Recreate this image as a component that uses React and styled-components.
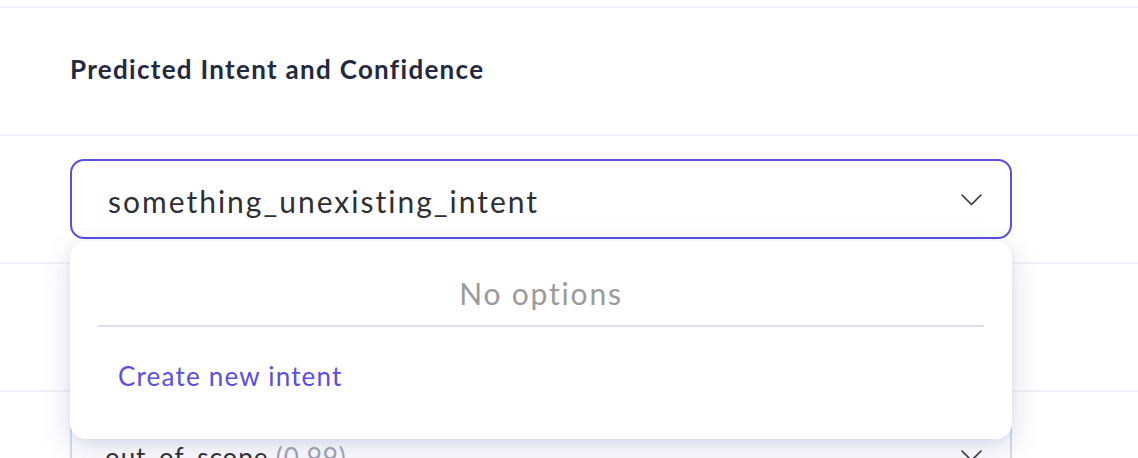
import styled, { createGlobalStyle } from 'styled-components';

const GlobalStyle = createGlobalStyle`
  body {
    margin: 0;
    background: #ffffff;
    font-family: Lato, 'Open Sans', sans-serif;
  }
`;

const Page = styled.div`
  padding-top: 6px;
  overflow: hidden;
  height: 452px;
`;

const Row = styled.div`
  display: flex;
  align-items: center;
  height: 126px;
  padding-left: 70px;
  border-top: 2px solid #f3f2f8;
`;

const Heading = styled.h3`
  margin: 0 0 5px;
  font-size: 26px;
  font-weight: 700;
  letter-spacing: 1.3px;
  color: #232940;
`;

const SelectWrap = styled.div`
  position: relative;
  width: 942px;
  z-index: ${({ $open }) => ($open ? 2 : 1)};
`;

const Control = styled.div`
  box-sizing: border-box;
  height: 80px;
  display: flex;
  align-items: center;
  justify-content: space-between;
  padding: 0 28px 0 ${({ $focused }) => ($focused ? '36px' : '33px')};
  border: 2px solid ${({ $focused }) => ($focused ? '#5a4fe0' : '#d8d9ee')};
  border-radius: 14px;
  background: #fff;
`;

const Value = styled.span`
  padding-top: 4px;
  font-size: ${({ $size }) => $size}px;
  letter-spacing: ${({ $spacing }) => $spacing}px;
  color: #2f2f33;
`;

const Score = styled.span`
  color: #a3a6b4;
`;

const Chevron = styled.svg`
  width: 21px;
  height: 12px;
  margin-top: 2px;
  flex-shrink: 0;
`;

const Menu = styled.div`
  position: absolute;
  top: calc(100% + 2px);
  left: 0;
  right: 0;
  height: 198px;
  background: #fff;
  border-radius: 16px;
  box-shadow: 0 10px 30px rgba(70, 72, 150, 0.18), 0 2px 8px rgba(70, 72, 150, 0.08);
`;

const NoOptions = styled.div`
  padding: 34px 0 14px;
  line-height: 36px;
  font-size: 30px;
  letter-spacing: 1.8px;
  text-align: center;
  color: #9a9a9a;
`;

const Divider = styled.div`
  height: 2px;
  margin: 0 28px;
  background: #dcdff0;
`;

const CreateOption = styled.div`
  padding: 31px 48px 0;
  line-height: 36px;
  font-size: 26px;
  letter-spacing: 1.2px;
  color: #5a4fe0;
`;

function ChevronDown() {
  return (
    <Chevron viewBox="0 0 21 12" fill="none">
      <path d="M1 1l9.5 9.5L20 1" stroke="#2d3142" strokeWidth="1.6" strokeLinecap="round" strokeLinejoin="round" />
    </Chevron>
  );
}

function Select({ value, score, focused, open, size, spacing }) {
  return (
    <SelectWrap $open={open}>
      <Control $focused={focused}>
        <Value $size={size} $spacing={spacing}>
          {value}
          {score && <Score> ({score})</Score>}
        </Value>
        <ChevronDown />
      </Control>
      {open && (
        <Menu>
          <NoOptions>No options</NoOptions>
          <Divider />
          <CreateOption>Create new intent</CreateOption>
        </Menu>
      )}
    </SelectWrap>
  );
}

export default function App() {
  return (
    <>
      <GlobalStyle />
      <Page>
        <Row>
          <Heading>Predicted Intent and Confidence</Heading>
        </Row>
        <Row>
          <Select value="something_unexisting_intent" size={30} spacing={2} focused open />
        </Row>
        <Row />
        <Row>
          <Select value="out_of_scope" score="0.99" size={26} spacing={0.9} />
        </Row>
      </Page>
    </>
  );
}
